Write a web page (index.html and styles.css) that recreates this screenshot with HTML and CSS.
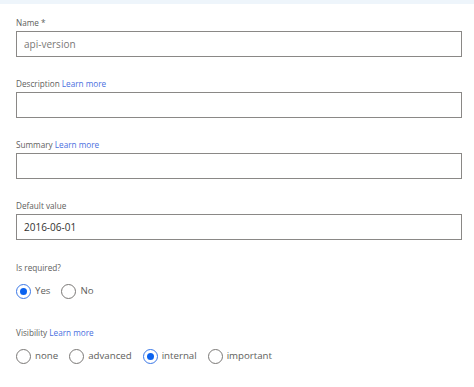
FILE: index.html
```html
<!DOCTYPE html>
<html lang="en">
<head>
    <meta charset="UTF-8">
    <title>Parameter</title>
    <link rel="stylesheet" href="styles.css">
</head>
<body>
    <div class="topbar"></div>
    <form class="form">
        <div class="field">
            <label class="label">Name *</label>
            <input class="input light" type="text" value="api-version">
        </div>
        <div class="field">
            <label class="label">Description <a href="#">Learn more</a></label>
            <input class="input" type="text">
        </div>
        <div class="field">
            <label class="label">Summary <a href="#">Learn more</a></label>
            <input class="input" type="text">
        </div>
        <div class="field">
            <label class="label">Default value</label>
            <input class="input" type="text" value="2016-06-01">
        </div>
        <div class="field">
            <label class="label">Is required?</label>
            <div class="choices">
                <label class="choice"><span class="radio checked"></span>Yes</label>
                <label class="choice"><span class="radio"></span>No</label>
            </div>
        </div>
        <div class="field">
            <label class="label">Visibility <a href="#">Learn more</a></label>
            <div class="choices">
                <label class="choice"><span class="radio"></span>none</label>
                <label class="choice"><span class="radio"></span>advanced</label>
                <label class="choice"><span class="radio checked"></span>internal</label>
                <label class="choice"><span class="radio"></span>important</label>
            </div>
        </div>
    </form>
</body>
</html>
```

FILE: styles.css
```css
* {
    margin: 0;
    padding: 0;
    box-sizing: border-box;
}

body {
    font-family: 'Open Sans', 'Noto Sans', sans-serif;
    background: white;
    color: #323130;
}

.topbar {
    height: 4px;
    background: #eef5fb;
}

.form {
    padding: 11px 12px 0 16px;
    display: flex;
    flex-direction: column;
    gap: 19px;
}

.label {
    display: block;
    font-size: 8.2px;
    line-height: 16px;
    color: #605e5c;
}

.label a {
    color: #4a6fe0;
    text-decoration: none;
}

.input {
    display: block;
    width: 100%;
    height: 26px;
    border: 1px solid #8a8886;
    padding: 0 7px;
    font-family: inherit;
    font-size: 10px;
    color: #323130;
    background: white;
}

.input.light {
    color: #7a7876;
}

.field:nth-child(5) {
    margin-top: 1px;
}

.field:nth-child(6) {
    margin-top: 5px;
}

.choices {
    display: flex;
    gap: 11px;
    margin-top: 5px;
}

.choice {
    display: flex;
    align-items: center;
    gap: 4px;
    font-size: 9.7px;
    line-height: 20px;
    color: #605e5c;
}

.radio {
    width: 15px;
    height: 15px;
    border: 1px solid #7a7876;
    border-radius: 50%;
    position: relative;
}

.radio.checked {
    border-color: #3b78e7;
}

.radio.checked::after {
    content: "";
    position: absolute;
    left: 3px;
    top: 3px;
    width: 7px;
    height: 7px;
    border-radius: 50%;
    background: #0a62f0;
}
```
